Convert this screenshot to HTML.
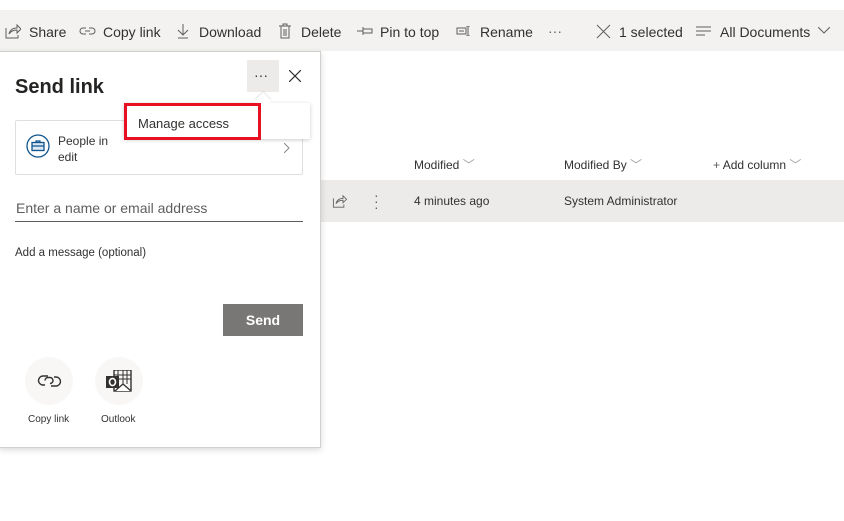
<!DOCTYPE html>
<html><head><style>
body{margin:0;width:844px;height:521px;background:#fff;font-family:"Liberation Sans",sans-serif;color:#323130;position:relative;overflow:hidden}
.a{position:absolute;white-space:nowrap}
.tb{position:absolute;left:0;top:10px;width:844px;height:41px;background:#f3f2f1}
.t{position:absolute;top:24px;font-size:14px;color:#323130}
svg{position:absolute}
</style></head><body>
<div class="tb"></div>
<svg style="left:5px;top:23px" width="16" height="16" viewBox="0 0 16 16" fill="none" stroke="#605e5c" stroke-width="1"><path d="M1 5v10h12v-3"/><path d="M4 11c1-4 4-6 8-6V2l4 4-4 4V7c-3 0-6 1-8 4z"/></svg>
<div class="t" style="left:29px">Share</div>
<svg style="left:79px;top:25px" width="17" height="12" viewBox="0 0 17 12" fill="none" stroke="#605e5c"><path d="M7 3H4a3 3 0 000 6h3M6 6h5M10 3h3a3 3 0 010 6h-3"/></svg>
<div class="t" style="left:103px">Copy link</div>
<svg style="left:177px;top:23px" width="12" height="16" viewBox="0 0 12 16" fill="none" stroke="#605e5c"><path d="M6 1v11M1 7l5 5 5-5M1 15h10"/></svg>
<div class="t" style="left:199px">Download</div>
<svg style="left:279px;top:23px" width="12" height="16" viewBox="0 0 12 16" fill="none" stroke="#605e5c"><path d="M0 3h12M4 3V1h4v2M2 3v12h8V3M5 6v7M7 6v7"/></svg>
<div class="t" style="left:301px">Delete</div>
<svg style="left:357px;top:26px" width="16" height="10" viewBox="0 0 16 10" fill="none" stroke="#605e5c"><path d="M0 5h6M6 1v8M6 3h9v4H6"/></svg>
<div class="t" style="left:380px">Pin to top</div>
<svg style="left:456px;top:26px" width="16" height="10" viewBox="0 0 16 10" fill="none" stroke="#605e5c"><path d="M1 2h9v6H1zM3 5h5M12 0v10M10 0h4M10 10h4"/></svg>
<div class="t" style="left:480px">Rename</div>
<div class="t" style="left:548px;top:23px;color:#605e5c">···</div>
<svg style="left:596px;top:24px" width="15" height="15" viewBox="0 0 15 15" stroke="#605e5c"><path d="M1 1l13 13M14 1L1 14"/></svg>
<div class="t" style="left:619px">1 selected</div>
<svg style="left:696px;top:26px" width="15" height="10" viewBox="0 0 15 10" stroke="#605e5c"><path d="M0 1h15M0 5h15M0 9h9"/></svg>
<div class="t" style="left:720px">All Documents</div>
<svg style="left:818px;top:27px" width="12" height="7" viewBox="0 0 12 7" fill="none" stroke="#605e5c"><path d="M0 0l6 6 6-6"/></svg>

<div class="a" style="left:414px;top:156px;font-size:12px">Modified <span style="color:#a19f9d">﹀</span></div>
<div class="a" style="left:564px;top:156px;font-size:12px">Modified By <span style="color:#a19f9d">﹀</span></div>
<div class="a" style="left:713px;top:156px;font-size:12px"><span style="color:#605e5c">+</span> Add column <span style="color:#a19f9d">﹀</span></div>
<div class="a" style="left:320px;top:180px;width:524px;height:42px;background:#edebe9"></div>
<svg style="left:332px;top:194px" width="15" height="14" viewBox="0 0 16 16" fill="none" stroke="#605e5c"><path d="M1 5v10h12v-3"/><path d="M4 11c1-4 4-6 8-6V2l4 4-4 4V7c-3 0-6 1-8 4z"/></svg>
<div class="a" style="left:374px;top:192px;font-size:14px;color:#605e5c;line-height:6px">·<br>·<br>·</div>
<div class="a" style="left:414px;top:194px;font-size:12px">4 minutes ago</div>
<div class="a" style="left:564px;top:194px;font-size:12px">System Administrator</div>

<div class="a" style="left:-1px;top:51px;width:320px;height:395px;background:#fff;border:1px solid #d2d0ce;box-shadow:0 2px 6px rgba(0,0,0,.15)"></div>
<div class="a" style="left:15px;top:76px;font-size:20px;font-weight:bold;color:#252423">Send link</div>
<div class="a" style="left:247px;top:60px;width:32px;height:32px;background:#edebe9"></div>
<div class="a" style="left:254px;top:67px;font-size:14px;color:#323130">···</div>
<svg style="left:289px;top:70px" width="12" height="12" viewBox="0 0 12 12" stroke="#323130" stroke-width="1.2"><path d="M0 0l12 12M12 0L0 12"/></svg>
<div class="a" style="left:15px;top:120px;width:286px;height:53px;border:1px solid #e1dfdd;border-radius:2px"></div>
<svg style="left:26px;top:134px" width="24" height="24" viewBox="0 0 24 24" fill="none" stroke="#0f548c" stroke-width="1.3"><circle cx="12" cy="12" r="11"/><rect x="6" y="8.5" width="12" height="8" fill="#dbe8f4"/><path d="M10 8.5V7h4v1.5M6 12h12"/></svg>
<div class="a" style="left:58px;top:133px;font-size:12px;line-height:16px">People in<br>edit</div>
<svg style="left:284px;top:143px" width="6" height="10" viewBox="0 0 6 10" fill="none" stroke="#8a8886"><path d="M0 0l5 5-5 5"/></svg>
<div class="a" style="left:16px;top:200px;font-size:14px;color:#605e5c">Enter a name or email address</div>
<div class="a" style="left:15px;top:221px;width:288px;height:1px;background:#605e5c"></div>
<div class="a" style="left:15px;top:247px;font-size:11.5px;color:#323130">Add a message (optional)</div>
<div class="a" style="left:223px;top:304px;width:80px;height:32px;background:#797775;color:#fff;font-size:14px;font-weight:bold;text-align:center;line-height:33px">Send</div>
<div class="a" style="left:25px;top:357px;width:48px;height:48px;border-radius:50%;background:#f8f7f6"></div>
<svg style="left:36px;top:372px" width="27" height="18" viewBox="0 0 27 18" fill="none" stroke="#323130" stroke-width="1.4"><path d="M12 4H7a4.5 4.5 0 000 9h2M15 14h5a4.5 4.5 0 000-9h-2"/><path d="M9 8.5a3 3 0 013-3h2a3 3 0 010 6"/></svg>
<div class="a" style="left:28px;top:414px;font-size:10px">Copy link</div>
<div class="a" style="left:95px;top:357px;width:48px;height:48px;border-radius:50%;background:#f8f7f6"></div>
<svg style="left:106px;top:370px" width="26" height="22" viewBox="0 0 26 22"><rect x="8" y="0" width="17" height="21" fill="none" stroke="#323130" stroke-width="1.4"/><path d="M12 0v14M17 0v14M21 0v14M8 5h17M8 9h17" stroke="#323130"/><path d="M9 21l8-7 8 7" fill="#fff" stroke="#323130" stroke-width="1.3"/><rect x="0" y="6" width="13" height="12" fill="#323130"/><ellipse cx="6.5" cy="12" rx="3" ry="3.6" fill="none" stroke="#fff" stroke-width="1.6"/></svg>
<div class="a" style="left:101px;top:414px;font-size:10px">Outlook</div>

<div class="a" style="left:124px;top:103px;width:186px;height:36px;background:#fff;box-shadow:0 1px 4px rgba(0,0,0,.2)"></div>
<div class="a" style="left:257px;top:95px;width:12px;height:12px;background:#fff;transform:rotate(45deg);box-shadow:-1px -1px 2px rgba(0,0,0,.1)"></div>
<div class="a" style="left:124px;top:103px;height:37px;border:3px solid #e81123;box-sizing:border-box;width:137px"></div>
<div class="a" style="left:138px;top:116px;font-size:13px;color:#323130">Manage access</div>
</body></html>
